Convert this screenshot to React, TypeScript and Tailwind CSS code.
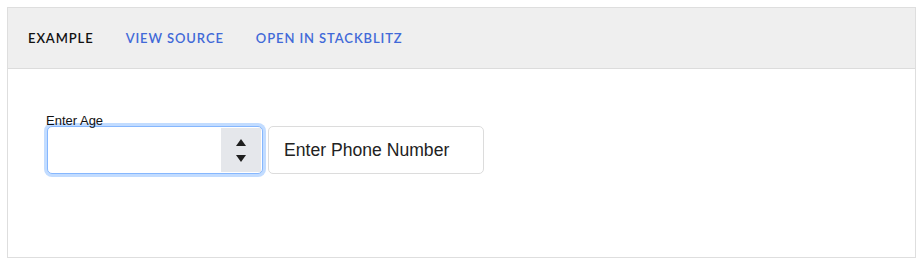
import { useState } from 'react';

export default function App() {
  const [age, setAge] = useState('');
  const [phone, setPhone] = useState('');

  const step = (d: number) => {
    const n = Number(age || 0) + d;
    setAge(String(n));
  };

  return (
    <div className="pt-[7px] pl-[7px] bg-white min-h-screen">
      <div className="w-[909px] border border-[#dedede]">
        {/* Tabs */}
        <div
          className="h-[61px] pt-[2px] bg-[#efefef] border-b border-[#dcdcdc] flex items-center gap-8 pl-5 text-[13px] tracking-[0.9px] font-semibold uppercase"
          style={{ fontFamily: 'Lato, "Open Sans", sans-serif' }}
        >
          <span className="text-[#111]">Example</span>
          <a className="text-[#4169d8] cursor-pointer">View Source</a>
          <a className="text-[#4169d8] cursor-pointer">Open in StackBlitz</a>
        </div>

        {/* Demo */}
        <div
          className="pt-[46px] pb-[83px] pl-[38px]"
          style={{ fontFamily: '"Liberation Sans", Arial, sans-serif' }}
        >
          <label className="relative z-10 block text-[13px] leading-[12px] text-[#111] -mb-[1px]">
            Enter Age
          </label>
          <div className="flex items-center">
            <div className="flex w-[216px] h-[48px] ml-[1px] rounded-[5px] border border-[#86b7fe] bg-white shadow-[0_0_0_3px_#c2dcff] overflow-hidden">
              <input
                type="text"
                value={age}
                onChange={(e) => setAge(e.target.value)}
                className="flex-1 min-w-0 px-3 text-[17.6px] outline-none bg-transparent"
              />
              <div className="w-[40px] my-[1px] mr-[1px] bg-[#e5e7eb] flex flex-col items-center justify-center gap-[9px]">
                <button onClick={() => step(1)} className="block">
                  <svg width="10" height="7" viewBox="0 0 10 7">
                    <path d="M5 0L10 7H0Z" fill="#1f1f1f" />
                  </svg>
                </button>
                <button onClick={() => step(-1)} className="block">
                  <svg width="10" height="7" viewBox="0 0 10 7">
                    <path d="M0 0H10L5 7Z" fill="#1f1f1f" />
                  </svg>
                </button>
              </div>
            </div>
            <input
              type="text"
              value={phone}
              onChange={(e) => setPhone(e.target.value)}
              placeholder="Enter Phone Number"
              className="ml-[5px] w-[216px] h-[48px] rounded-[5px] border border-[#dcdcdc] pl-[15px] text-[17.6px] text-[#222] placeholder:text-[#222] outline-none"
            />
          </div>
        </div>
      </div>
    </div>
  );
}
